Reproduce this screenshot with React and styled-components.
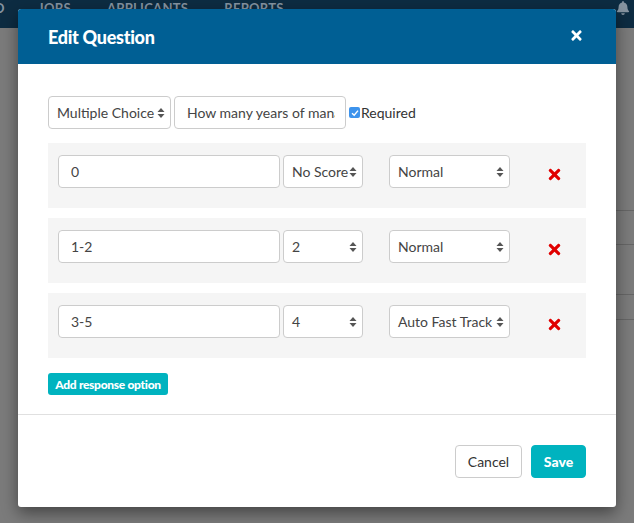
import styled, { createGlobalStyle } from 'styled-components';
import { FaTimes, FaBell } from 'react-icons/fa';

const GlobalStyle = createGlobalStyle`
  html, body { margin: 0; padding: 0; }
  body {
    font-family: Lato, "Liberation Sans", sans-serif;
    background: #7b7b7b;
    width: 634px;
    height: 523px;
    overflow: hidden;
  }
`;

// dimmed page behind the dialog
const Page = styled.div`
  position: relative;
  width: 634px;
  height: 523px;
  background: #7b7b7b;
  overflow: hidden;
`;

const NavBar = styled.div`
  height: 28px;
  box-sizing: border-box;
  background: #0d2c42;
  display: flex;
  align-items: flex-start;
  padding-top: 1px;
  color: #8593a0;
  font-size: 13px;
  line-height: 15px;
  font-weight: 700;
  letter-spacing: 0.3px;
`;

const Logo = styled.span`
  margin-left: -6px;
  width: 44px;
`;

const NavLink = styled.span`
  margin-right: 36px;
`;

const Bell = styled.span`
  margin-left: auto;
  margin-right: 4px;
  margin-top: 0;
  color: #8593a0;
  font-size: 14px;
`;

const BgTable = styled.div`
  margin: 182px 0 0 120px;
  display: flex;
  flex-direction: column;
`;

const BgRow = styled.div`
  height: ${({ $h }) => $h}px;
  border-top: 1px solid #666;
`;

const Overlay = styled.div`
  position: absolute;
  inset: 0;
`;

const Modal = styled.div`
  position: absolute;
  left: 18px;
  top: 9px;
  width: 598px;
  height: 498px;
  background: #fff;
  border-radius: 3px;
  box-shadow: 0 6px 16px rgba(0, 0, 0, 0.45);
  display: flex;
  flex-direction: column;
  overflow: hidden;
`;

const Header = styled.div`
  height: 55px;
  flex: none;
  background: #005f94;
  display: flex;
  align-items: center;
  justify-content: space-between;
  padding: 0 32px 0 30px;
  color: #fff;
`;

const Title = styled.h1`
  margin: 0;
  font-size: 18px;
  font-weight: 900;
  letter-spacing: -0.3px;
`;

const Close = styled.span`
  display: flex;
  font-size: 15px;
  margin-top: -2px;
`;

const Body = styled.div`
  padding: 32px 30px 19px;
  border-bottom: 1px solid #e0e0e0;
  display: flex;
  flex-direction: column;
`;

const TopRow = styled.div`
  display: flex;
  align-items: center;
  gap: 3px;
  margin-bottom: 14px;
`;

const Field = styled.div`
  box-sizing: border-box;
  width: ${({ $w }) => $w}px;
  height: 33px;
  flex: none;
  border: 1px solid #ccc;
  border-radius: 4px;
  background: #fff;
  display: flex;
  align-items: center;
  justify-content: space-between;
  padding: 0 5px 0 8px;
  font-size: 14px;
  color: #444;
  white-space: nowrap;
  overflow: hidden;
`;

const TextInput = styled.input`
  box-sizing: border-box;
  width: ${({ $w }) => $w}px;
  height: 33px;
  flex: none;
  border: 1px solid #ccc;
  border-radius: 4px;
  background: #fff;
  padding: 0 10px 0 12px;
  font-family: inherit;
  font-size: 14px;
  color: #444;
  outline: none;
`;

const Check = styled.span`
  width: 11px;
  height: 11px;
  border-radius: 2px;
  background: #3d93ec;
  display: flex;
  align-items: center;
  justify-content: center;
`;

const Label = styled.span`
  font-size: 14px;
  color: #333;
  margin-left: -2px;
`;

const Options = styled.div`
  display: flex;
  flex-direction: column;
  gap: 10px;
  margin-bottom: 15px;
`;

const OptionRow = styled.div`
  height: 65px;
  box-sizing: border-box;
  background: #f5f5f5;
  display: flex;
  align-items: flex-start;
  padding: 12px 10px 0;
`;

const Gap = styled.span`
  width: ${({ $w }) => $w}px;
  flex: none;
`;

const Remove = styled.span`
  display: flex;
  color: #e00000;
  font-size: 17px;
  margin-top: 11px;
`;

const AddButton = styled.button`
  align-self: flex-start;
  height: 22px;
  width: 120px;
  border: none;
  border-radius: 3px;
  background: #00b3bf;
  color: #fff;
  font-family: inherit;
  font-weight: 900;
  font-size: 12px;
  letter-spacing: -0.3px;
  padding: 0;
`;

const Footer = styled.div`
  display: flex;
  justify-content: flex-end;
  gap: 9px;
  padding: 30px 30px 0;
`;

const Button = styled.button`
  height: 33px;
  box-sizing: border-box;
  border-radius: 4px;
  font-family: inherit;
  font-size: 14px;
  padding: 0;
  width: ${({ $w }) => $w}px;
  border: 1px solid ${({ $primary }) => ($primary ? '#00b3bf' : '#ccc')};
  background: ${({ $primary }) => ($primary ? '#00b3bf' : '#fff')};
  color: ${({ $primary }) => ($primary ? '#fff' : '#333')};
  font-weight: ${({ $primary }) => ($primary ? 900 : 400)};
`;

const Arrows = () => (
  <svg width="8" height="12" viewBox="0 0 8 12">
    <path d="M4 1 L7.5 5 H0.5 Z" fill="#555" />
    <path d="M4 11 L7.5 7 H0.5 Z" fill="#555" />
  </svg>
);

const Select = ({ w, children }) => (
  <Field $w={w}>
    <span>{children}</span>
    <Arrows />
  </Field>
);

const options = [
  { text: '0', score: 'No Score', kind: 'Normal' },
  { text: '1-2', score: '2', kind: 'Normal' },
  { text: '3-5', score: '4', kind: 'Auto Fast Track' },
];

export default function App() {
  return (
    <>
      <GlobalStyle />
      <Page>
        <NavBar>
          <Logo>O</Logo>
          <NavLink>JOBS</NavLink>
          <NavLink>APPLICANTS</NavLink>
          <NavLink>REPORTS</NavLink>
          <Bell><FaBell /></Bell>
        </NavBar>
        <BgTable>
          <BgRow $h={33} />
          <BgRow $h={49} />
          <BgRow $h={24} />
          <BgRow $h={60} />
        </BgTable>
        <Overlay>
          <Modal>
            <Header>
              <Title>Edit Question</Title>
              <Close><FaTimes /></Close>
            </Header>
            <Body>
              <TopRow>
                <Select w={123}>Multiple Choice</Select>
                <TextInput $w={172} readOnly value="How many years of management experience do you have?" />
                <Check>
                  <svg width="8" height="8" viewBox="0 0 8 8">
                    <path d="M1 4.2 L3.2 6.3 L7 1.6" stroke="#fff" strokeWidth="1.4" fill="none" />
                  </svg>
                </Check>
                <Label>Required</Label>
              </TopRow>
              <Options>
                {options.map(o => (
                  <OptionRow key={o.text}>
                    <TextInput $w={222} readOnly value={o.text} />
                    <Gap $w={3} />
                    <Select w={80}>{o.score}</Select>
                    <Gap $w={26} />
                    <Select w={121}>{o.kind}</Select>
                    <Gap $w={36} />
                    <Remove><FaTimes /></Remove>
                  </OptionRow>
                ))}
              </Options>
              <AddButton>Add response option</AddButton>
            </Body>
            <Footer>
              <Button $w={67}>Cancel</Button>
              <Button $w={55} $primary>Save</Button>
            </Footer>
          </Modal>
        </Overlay>
      </Page>
    </>
  );
}
